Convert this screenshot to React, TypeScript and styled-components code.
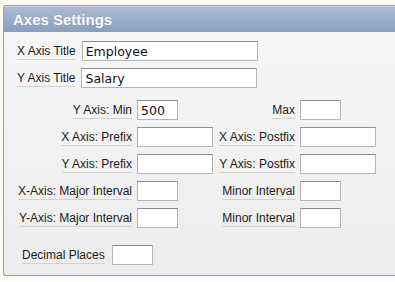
import styled, {createGlobalStyle} from "styled-components"

const GlobalStyle = createGlobalStyle`
  html, body {
    margin: 0;
    padding: 0;
    background: #fcfbf4;
    overflow: hidden;
  }
`

const Panel = styled.div`
  margin: 5px 0 0 3px;
  width: 400px;
  height: 271px;
  box-sizing: border-box;
  border: 1px solid #9a9ea4;
  border-right: none;
  border-radius: 3px 0 0 3px;
  background: linear-gradient(#f7f7f7, #ededed);
  font-family: "Liberation Sans", Arial, sans-serif;
  overflow: hidden;
`

const Header = styled.div`
  height: 26px;
  background: linear-gradient(#acbbd5, #8a9fc0);
  color: #fff;
  font-weight: bold;
  font-size: 15px;
  line-height: 25px;
  padding-left: 9px;
  border-top: 1px solid #d4dbe6;
  box-sizing: border-box;
  text-shadow: 0 0 1px rgba(90, 110, 150, 0.6);
`

const Body = styled.div`
  padding: 9px 0 0 13px;
`

const TitleRow = styled.div`
  display: flex;
  align-items: center;
  gap: 6px;
  margin-bottom: 7px;
`

const Label = styled.span`
  font-size: 12px;
  color: #1a1a1a;
  border-bottom: 1px solid #d2d2d2;
  line-height: 16px;
  white-space: nowrap;
`

const Input = styled.input<{$w: number}>`
  width: ${({$w}) => `${$w}px`};
  height: 20px;
  box-sizing: border-box;
  border: 1px solid #b5b5b5;
  border-top-color: #8e8e8e;
  background: #fff;
  font-family: "DejaVu Sans", "Lucida Grande", sans-serif;
  font-size: 12.5px;
  color: #111;
  padding: 0 3px;
  margin: 0;
  outline: none;
`

const Grid = styled.div`
  display: grid;
  grid-template-columns: 115px 76px 77px 76px;
  column-gap: 5px;
  row-gap: 7px;
  align-items: center;
  margin-top: 12px;
  justify-items: start;
`

const RightLabel = styled(Label)`
  justify-self: end;
`

const DecimalRow = styled.div`
  display: flex;
  align-items: center;
  gap: 7px;
  margin: 17px 0 0 5px;
`

const fields: [string, number, string, number, string?][] = [
  ["Y Axis: Min", 41, "Max", 41, "500"],
  ["X Axis: Prefix", 76, "X Axis: Postfix", 76],
  ["Y Axis: Prefix", 76, "Y Axis: Postfix", 76],
  ["X-Axis: Major Interval", 41, "Minor Interval", 41],
  ["Y-Axis: Major Interval", 41, "Minor Interval", 41],
]

const App = () => (
  <>
    <GlobalStyle />
    <Panel>
      <Header>Axes Settings</Header>
      <Body>
        <TitleRow>
          <Label>X Axis Title</Label>
          <Input $w={176} defaultValue="Employee" />
        </TitleRow>
        <TitleRow>
          <Label>Y Axis Title</Label>
          <Input $w={176} defaultValue="Salary" />
        </TitleRow>
        <Grid>
          {fields.map(([l1, w1, l2, w2, v]) => [
            <RightLabel key={l1 + "a"}>{l1}</RightLabel>,
            <Input key={l1 + "b"} $w={w1} defaultValue={v ?? ""} />,
            <RightLabel key={l1 + "c"}>{l2}</RightLabel>,
            <Input key={l1 + "d"} $w={w2} />,
          ])}
        </Grid>
        <DecimalRow>
          <Label>Decimal Places</Label>
          <Input $w={41} />
        </DecimalRow>
      </Body>
    </Panel>
  </>
)

export default App
